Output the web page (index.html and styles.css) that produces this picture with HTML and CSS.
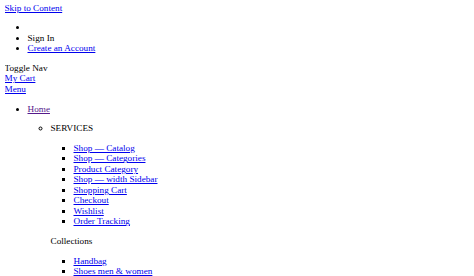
FILE: index.html
```html
<!DOCTYPE html>
<html lang="en">
<head>
    <meta charset="UTF-8">
    <meta name="viewport" content="width=device-width, initial-scale=1.0">
    <title>Shop</title>
    <link rel="stylesheet" href="styles.css">
</head>
<body>
    <a href="#content">Skip to Content</a>

    <ul class="header-links">
        <li></li>
        <li>Sign In</li>
        <li><a href="#register">Create an Account</a></li>
    </ul>

    <div class="nav-toggle">Toggle Nav</div>
    <div><a href="#cart">My Cart</a></div>
    <div><a href="#menu">Menu</a></div>

    <ul class="menu">
        <li><a class="visited" href="#home">Home</a>
            <div class="submenu">
                <ul class="sub-level">
                    <li>SERVICES
                        <ul class="sub-level">
                            <li><a href="#catalog">Shop — Catalog</a></li>
                            <li><a href="#categories">Shop — Categories</a></li>
                            <li><a href="#product-category">Product Category</a></li>
                            <li><a href="#sidebar">Shop — width Sidebar</a></li>
                            <li><a href="#shopping-cart">Shopping Cart</a></li>
                            <li><a href="#checkout">Checkout</a></li>
                            <li><a href="#wishlist">Wishlist</a></li>
                            <li><a href="#tracking">Order Tracking</a></li>
                        </ul>
                        Collections
                        <ul class="sub-level">
                            <li><a href="#handbag">Handbag</a></li>
                            <li><a href="#shoes">Shoes men &amp; women</a></li>
                        </ul>
                    </li>
                </ul>
            </div>
        </li>
    </ul>
</body>
</html>
```

FILE: styles.css
```css
body {
    font-family: "Liberation Serif", "Times New Roman", serif;
    font-size: 9.2px;
    line-height: 10.5px;
    color: #000;
    margin: 2.5px 4.5px 4.5px;
}

a {
    color: #0000ee;
}

a.visited {
    color: #551a8b;
}

ul {
    margin: 1em 0;
    padding-left: 23px;
}

.sub-level {
    margin: 1em 0;
}
```
